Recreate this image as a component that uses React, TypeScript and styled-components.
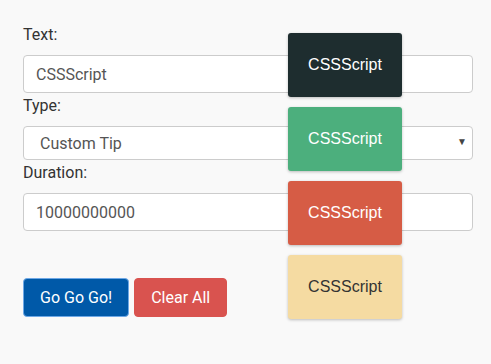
import React from "react";
import styled, { createGlobalStyle } from "styled-components";

const toasts = [
  { bg: "#1e2d2f", color: "#ffffff" },
  { bg: "#4caf7d", color: "#ffffff" },
  { bg: "#d65c45", color: "#ffffff" },
  { bg: "#f5dba2", color: "#333333" },
];

function App() {
  return (
    <Page>
      <GlobalStyle />
      <Form>
        <Label>Text:</Label>
        <Input defaultValue="CSSScript" />
        <Label>Type:</Label>
        <SelectWrap>
          <Select defaultValue="custom">
            <option value="custom">Custom Tip</option>
          </Select>
          <Caret>▼</Caret>
        </SelectWrap>
        <Label>Duration:</Label>
        <Input defaultValue="10000000000" />
        <Actions>
          <Button $bg="#0059a8" $focus>
            Go Go Go!
          </Button>
          <Button $bg="#d9534f">Clear All</Button>
        </Actions>
      </Form>
      <ToastStack>
        {toasts.map((t, i) => (
          <Toast key={i} $bg={t.bg} $color={t.color}>
            CSSScript
          </Toast>
        ))}
      </ToastStack>
    </Page>
  );
}

const GlobalStyle = createGlobalStyle`
  body {
    margin: 0;
    background: #f9f9f9;
    font-family: Roboto, "Liberation Sans", sans-serif;
  }
`;

const Page = styled.div`
  position: relative;
  width: 491px;
  height: 364px;
  padding: 25px 19px 0 23px;
  box-sizing: border-box;
`;

const Form = styled.div`
  display: flex;
  flex-direction: column;
  width: 450px;
`;

const Label = styled.label`
  font-size: 16px;
  line-height: 20px;
  color: #333;
  margin: 3px 0 10px 0;

  &:first-child {
    margin-top: 0;
  }
`;

const Input = styled.input`
  height: 38px;
  box-sizing: border-box;
  border: 1px solid #cccccc;
  border-radius: 4px;
  background: #fff;
  padding: 0 12px;
  font-family: Roboto, sans-serif;
  font-size: 16px;
  color: #555;
  outline: none;
`;

const SelectWrap = styled.div`
  position: relative;
`;

const Select = styled.select`
  width: 100%;
  height: 34px;
  box-sizing: border-box;
  border: 1px solid #cccccc;
  border-radius: 4px;
  background: #fff;
  padding: 0 16px;
  font-family: Roboto, sans-serif;
  font-size: 16px;
  color: #555;
  appearance: none;
  outline: none;
`;

const Caret = styled.span`
  position: absolute;
  right: 6px;
  top: 11px;
  font-size: 10px;
  line-height: 10px;
  color: #444;
  pointer-events: none;
`;

const Actions = styled.div`
  display: flex;
  gap: 5px;
  margin-top: 47px;
`;

const Button = styled.button<{ $bg: string; $focus?: boolean }>`
  height: 39px;
  padding: 0 16px;
  border: 1px solid ${(p) => (p.$focus ? "#6ea8e6" : p.$bg)};
  border-radius: 4px;
  background: ${(p) => p.$bg};
  color: #fff;
  font-family: Roboto, sans-serif;
  font-size: 16px;
  cursor: pointer;
`;

const ToastStack = styled.div`
  position: absolute;
  left: 288px;
  top: 33px;
  display: flex;
  flex-direction: column;
  gap: 10px;
`;

const Toast = styled.div<{ $bg: string; $color: string }>`
  width: 114px;
  height: 64px;
  display: flex;
  align-items: center;
  justify-content: center;
  border-radius: 3px;
  background: ${(p) => p.$bg};
  color: ${(p) => p.$color};
  font-family: "Liberation Sans", Arial, sans-serif;
  font-size: 16px;
  box-shadow: 0 1px 3px rgba(0, 0, 0, 0.25);
`;

export default App;
